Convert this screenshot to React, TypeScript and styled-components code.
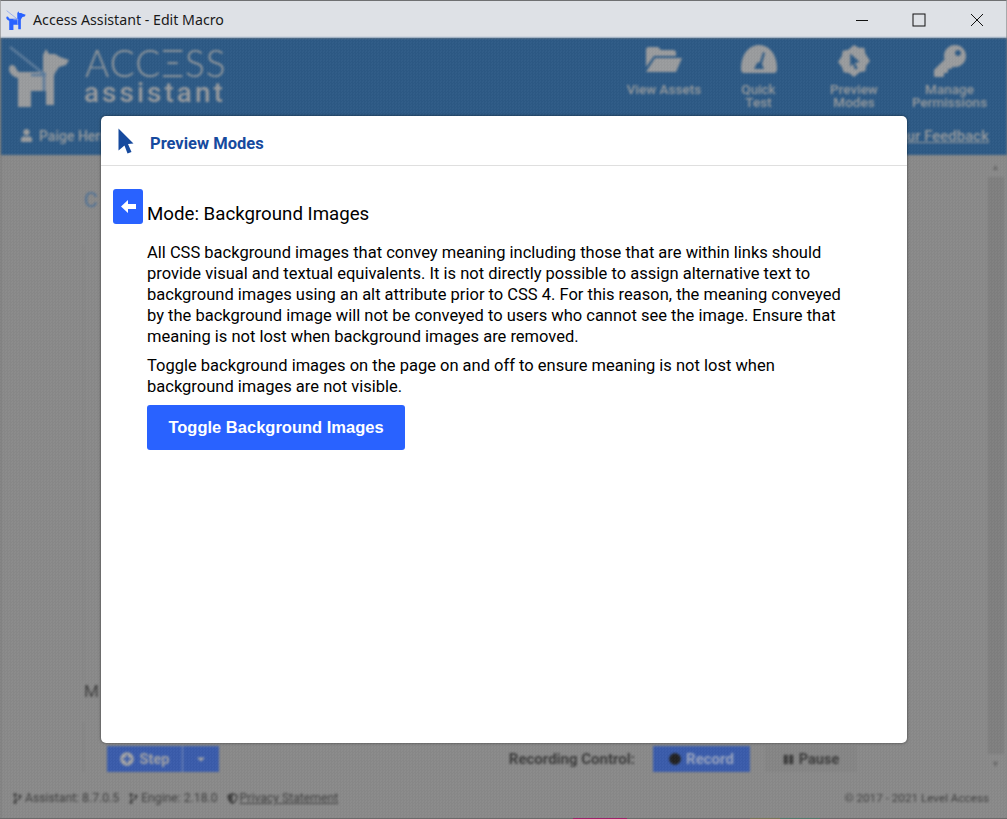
import React from "react";
import styled, { createGlobalStyle } from "styled-components";
import { FaKey, FaUser, FaPlusCircle, FaCaretDown, FaPause, FaCircle, FaCodeBranch, FaShieldAlt } from "react-icons/fa";

const Global = createGlobalStyle`
  html, body { margin: 0; padding: 0; width: 1007px; height: 819px; overflow: hidden; background: #8a8a8a; }
  body { font-family: Roboto, "Liberation Sans", sans-serif; }
  * { box-sizing: border-box; }
`;

const Shell = styled.div`
  position: relative;
  width: 1007px;
  height: 819px;
  display: flex;
  flex-direction: column;
  overflow: hidden;
  background: #8a8a8a;
`;

const TitleBar = styled.div`
  height: 38px;
  flex: none;
  display: flex;
  align-items: center;
  background: #dee1e6;
  border-top: 1px solid #6f7072;
  border-right: 1px solid #a8a9ab;
  border-left: 1px solid #a8a9ab;
  padding-left: 5px;
  color: #1a1a1a;
`;

const TitleText = styled.span`
  margin-left: 7px;
  flex: 1;
  font-family: "Noto Sans", "Open Sans", sans-serif;
  font-size: 14.2px;
`;

const WinButton = styled.div`
  width: 58px;
  height: 37px;
  display: flex;
  align-items: center;
  justify-content: center;
`;

const Backdrop = styled.div`
  flex: 1;
  display: flex;
  flex-direction: column;
  filter: blur(1.3px);
  min-height: 0;
  border-left: 1px solid #777;
`;

const Dither = styled.div`
  position: absolute;
  left: 0;
  right: 0;
  top: 38px;
  bottom: 1px;
  pointer-events: none;
  background: repeating-conic-gradient(rgba(0, 0, 0, 0.018) 0 25%, rgba(255, 255, 255, 0.018) 0 50%) 0 0 / 3px 3px;
`;

const BottomEdge = styled.div`
  position: absolute;
  left: 0;
  right: 0;
  bottom: 0;
  height: 1px;
  background: linear-gradient(
    to right,
    #6b6b6b 0 573px,
    #a0206a 573px 627px,
    #6b6b6b 627px 750px,
    #77775a 750px 780px,
    #557a6c 780px 820px,
    #6b6b6b 820px
  );
`;

const Header = styled.div`
  height: 78px;
  flex: none;
  display: flex;
  align-items: flex-start;
  background: #2d5a86;
  color: #9a9c9e;
  padding: 7px 0 0 7px;
`;

const LogoWords = styled.div`
  display: flex;
  flex-direction: column;
  margin-left: 14px;
  flex: 1;
`;

const LogoTop = styled.div`
  font: 300 37px/36px Lato, Roboto, sans-serif;
  letter-spacing: 1px;
  margin-left: 1px;
`;

const LogoBottom = styled.div`
  font: 500 28px/24px Roboto, sans-serif;
  letter-spacing: 3px;
`;

const Tool = styled.div<{ $w: number }>`
  width: ${(p) => p.$w}px;
  display: flex;
  flex-direction: column;
  align-items: center;
  font: 500 13.5px/13px Roboto, sans-serif;
  text-align: center;
  flex: none;
`;

const ToolIcon = styled.div<{ $top: number }>`
  height: 38px;
  display: flex;
  align-items: flex-start;
  justify-content: center;
  padding-top: ${(p) => p.$top}px;
`;

const NavRow = styled.div`
  height: 39px;
  flex: none;
  display: flex;
  align-items: center;
  justify-content: space-between;
  background: #2d5a86;
  color: #9a9c9e;
  font: 500 14px Roboto, sans-serif;
  padding: 0 18px 0 19px;
`;

const NavUser = styled.span`
  display: flex;
  align-items: center;
  gap: 6px;
`;

const NavLink = styled.span`
  text-decoration: underline;
  font-size: 15px;
`;

const Content = styled.div`
  flex: 1;
  display: flex;
  flex-direction: column;
  min-height: 0;
  background: #8a8a8a;
  padding: 33px 0 0 82px;
  position: relative;
`;

const BlueHeading = styled.div`
  color: #4b6f96;
  font: 400 21px Roboto, sans-serif;
  margin-left: 1px;
`;

const PanelEdge = styled.div`
  flex: 1;
  margin-top: 33px;
  border-left: 1px solid #838383;
`;

const MacroLabel = styled.div`
  color: #3e3e3e;
  font: 400 17px Roboto, sans-serif;
  margin: 0 0 21px 1px;
`;

const ControlRow = styled.div`
  display: flex;
  align-items: flex-end;
  height: 50px;
  border-left: 1px solid #808080;
  padding-left: 23px;
  margin-bottom: 19px;
  padding-right: 150px;
`;

const StepButton = styled.div`
  width: 76px;
  height: 26px;
  background: #3a5cab;
  color: #a5a5a5;
  font: 700 14.5px Roboto, sans-serif;
  display: flex;
  align-items: center;
  justify-content: center;
  gap: 6px;
  border-right: 1px solid #7a8cb8;
`;

const CaretButton = styled.div`
  width: 36px;
  height: 26px;
  background: #3a5cab;
  color: #a5a5a5;
  display: flex;
  align-items: center;
  justify-content: center;
`;

const RecLabel = styled.div`
  margin-left: auto;
  color: #3c3c3c;
  font: 700 15px/26px Roboto, sans-serif;
  margin-right: 18px;
`;

const RecordButton = styled.div`
  width: 97px;
  height: 26px;
  background: #3a5cab;
  color: #9aa5c0;
  font: 700 15px Roboto, sans-serif;
  display: flex;
  align-items: center;
  justify-content: center;
  gap: 5px;
`;

const PauseButton = styled.div`
  width: 92px;
  height: 26px;
  margin-left: 15px;
  background: #868686;
  color: #3c3c3c;
  font: 700 14.5px Roboto, sans-serif;
  display: flex;
  align-items: center;
  justify-content: center;
  gap: 5px;
`;

const Footer = styled.div`
  height: 28px;
  flex: none;
  display: flex;
  align-items: flex-start;
  gap: 9px;
  color: #3f3f3f;
  font: 400 12.2px Roboto, sans-serif;
  margin-left: -82px;
  padding: 0 18px 0 11px;
`;

const FooterItem = styled.span`
  display: flex;
  align-items: center;
  gap: 2px;
`;

const FooterLink = styled.span`
  text-decoration: underline;
`;

const Copyright = styled.span`
  margin-left: auto;
  font-size: 11.7px;
`;

const ScrollTrack = styled.div`
  position: absolute;
  top: 7px;
  right: 3px;
  width: 17px;
  height: 607px;
  display: flex;
  flex-direction: column;
  align-items: center;
  color: #6a6a6a;
  font-size: 9px;
  line-height: 10px;
`;

const ScrollThumb = styled.div`
  width: 16px;
  flex: 1;
  margin: 5px 0 5px;
  background: #7f7f7f;
`;

const Modal = styled.div`
  position: absolute;
  left: 101px;
  top: 116px;
  width: 806px;
  height: 627px;
  background: #fff;
  border-radius: 5px;
  box-shadow: 0 0 3px rgba(0, 0, 0, 0.55);
  color: #000;
`;

const ModalHeader = styled.div`
  height: 50px;
  display: flex;
  align-items: center;
  border-bottom: 1px solid #dfdfdf;
  padding-left: 17px;
`;

const ModalTitle = styled.h1`
  margin: 6px 0 0 16px;
  color: #164a9e;
  font: 700 16.5px Roboto, sans-serif;
`;

const ModalBody = styled.div`
  display: flex;
  align-items: flex-start;
  padding: 23px 46px 0 12px;
`;

const BackButton = styled.button`
  width: 30px;
  height: 35px;
  flex: none;
  padding: 0;
  border: 0;
  border-radius: 3px;
  background: #2962ff;
  color: #fff;
  display: flex;
  align-items: center;
  justify-content: center;
  margin-right: 4px;
`;

const Column = styled.div`
  flex: 1;
`;

const ModeHeading = styled.h2`
  margin: 15px 0 17px;
  font: 400 18.7px/21px Roboto, sans-serif;
`;

const Para = styled.p`
  margin: 0 0 8px;
  font: 400 16.5px/21px Roboto, sans-serif;
`;

const ToggleButton = styled.button`
  width: 258px;
  height: 45px;
  margin: 0;
  border: 0;
  border-radius: 3px;
  background: #2962ff;
  color: #fff;
  font: 700 16.5px "Liberation Sans", Arial, sans-serif;
`;

const Dog = ({ size, color, leash }: { size: number; color: string; leash: string }) => (
  <svg width={size} height={size} viewBox="0 0 62 62" fill={color}>
    <path d="M4 20c3 0 4 3 5 5 1 2 2 2 4 2h22V10l3-6 3 5h6l5 3 9 3-3 5-7 2-4 6-1 3v29H38V46H23v16H10V33C5 32 1 28 1 24c0-2 1-4 3-4z" />
    <path d="M2 2L36 29M36 27v19M23 30h15" stroke={leash} strokeWidth="2.6" fill="none" />
  </svg>
);

const Folder = () => (
  <svg width="36" height="25" viewBox="0 0 36 25" fill="currentColor">
    <path d="M0 3c0-2 1-3 3-3h9l3 3h12c2 0 3 1 3 3v3H8L0 20z" />
    <path d="M9 11h27l-6 14H0z" />
  </svg>
);

const Gauge = () => (
  <svg width="36" height="28" viewBox="0 0 36 28">
    <path d="M0 24C0 9 8 0 18 0s18 9 18 24c0 2-1 4-3 4H3c-2 0-3-2-3-4z" fill="currentColor" />
    <path d="M22 7l2 1-3 11 2 5H13l3-6 3-1z" fill="#2d5a86" />
  </svg>
);

const PreviewBadge = () => (
  <svg width="32" height="32" viewBox="0 0 34 34">
    <path d="M17 0l5 3 6 0 1 6 5 8-4 5-1 6-6 1-6 5-5-4-6-1-2-6-4-5 4-6 1-6 6-1z" fill="currentColor" />
    <path d="M13 9l10 9-5 1 3 6-3 1-2-6-3 3z" fill="#2d5a86" />
  </svg>
);

const Pointer = () => (
  <svg width="16" height="26" viewBox="0 0 16 26" fill="#164a9e">
    <path d="M0.5 0.5L15.5 15.5L10 16L13.5 24L9.5 25.5L6.5 17.5L0.5 22.5z" />
  </svg>
);

const BackArrow = () => (
  <svg width="15" height="13" viewBox="0 0 15 13" fill="#fff">
    <path d="M0 6.5L7 0v4h8v5H7v4z" />
  </svg>
);

export default function App() {
  return (
    <Shell>
      <Global />
      <TitleBar>
        <Dog size={20} color="#2962ff" leash="#8fa8ef" />
        <TitleText>Access Assistant - Edit Macro</TitleText>
        <WinButton>
          <svg width="14" height="14" viewBox="0 0 14 14"><path d="M2 7.5h12" stroke="#111" strokeWidth="1" /></svg>
        </WinButton>
        <WinButton>
          <svg width="14" height="14" viewBox="0 0 14 14"><rect x="1" y="1" width="12" height="12" fill="none" stroke="#111" strokeWidth="1" /></svg>
        </WinButton>
        <WinButton>
          <svg width="14" height="14" viewBox="0 0 14 14"><path d="M1 1l12 12M13 1L1 13" stroke="#111" strokeWidth="1" /></svg>
        </WinButton>
      </TitleBar>
      <Backdrop>
        <Header>
          <Dog size={62} color="#9a9c9e" leash="#5b7b9c" />
          <LogoWords>
            <LogoTop>ACCΞSS</LogoTop>
            <LogoBottom>assistant</LogoBottom>
          </LogoWords>
          <Tool $w={94}><ToolIcon $top={2}><Folder /></ToolIcon>View Assets</Tool>
          <Tool $w={95}><ToolIcon $top={0}><Gauge /></ToolIcon>Quick<br />Test</Tool>
          <Tool $w={96}><ToolIcon $top={0}><PreviewBadge /></ToolIcon>Preview<br />Modes</Tool>
          <Tool $w={95}><ToolIcon $top={0}><FaKey size={32} /></ToolIcon>Manage<br />Permissions</Tool>
          <div style={{ width: 10 }} />
        </Header>
        <NavRow>
          <NavUser><FaUser size={13} />Paige Hern</NavUser>
          <NavLink>Your Feedback</NavLink>
        </NavRow>
        <Content>
          <BlueHeading>C</BlueHeading>
          <PanelEdge />
          <MacroLabel>M</MacroLabel>
          <ControlRow>
            <StepButton><FaPlusCircle size={14} />Step</StepButton>
            <CaretButton><FaCaretDown size={12} /></CaretButton>
            <RecLabel>Recording Control:</RecLabel>
            <RecordButton><FaCircle size={12} color="#222" />Record</RecordButton>
            <PauseButton><FaPause size={11} />Pause</PauseButton>
          </ControlRow>
          <Footer>
            <FooterItem><FaCodeBranch size={11} />Assistant: 8.7.0.5</FooterItem>
            <FooterItem><FaCodeBranch size={11} />Engine: 2.18.0</FooterItem>
            <FooterItem><FaShieldAlt size={11} /><FooterLink>Privacy Statement</FooterLink></FooterItem>
            <Copyright>© 2017 - 2021 Level Access</Copyright>
          </Footer>
          <ScrollTrack>
            <span>▲</span>
            <ScrollThumb />
            <span>▼</span>
          </ScrollTrack>
        </Content>
      </Backdrop>
      <Dither />
      <BottomEdge />
      <Modal>
        <ModalHeader>
          <Pointer />
          <ModalTitle>Preview Modes</ModalTitle>
        </ModalHeader>
        <ModalBody>
          <BackButton aria-label="Back"><BackArrow /></BackButton>
          <Column>
            <ModeHeading>Mode: Background Images</ModeHeading>
            <Para>
              All CSS background images that convey meaning including those that are within links should provide visual and textual equivalents. It is not directly possible to assign alternative text to background images using an alt attribute prior to CSS 4. For this reason, the meaning conveyed by the background image will not be conveyed to users who cannot see the image. Ensure that meaning is not lost when background images are removed.
            </Para>
            <Para>
              Toggle background images on the page on and off to ensure meaning is not lost when background images are not visible.
            </Para>
            <ToggleButton>Toggle Background Images</ToggleButton>
          </Column>
        </ModalBody>
      </Modal>
    </Shell>
  );
}
